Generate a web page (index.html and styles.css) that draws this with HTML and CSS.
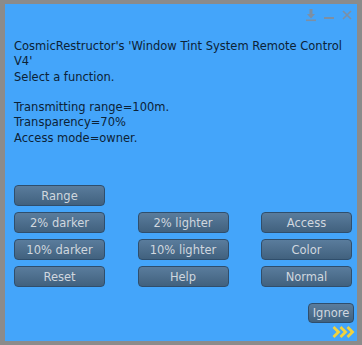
FILE: index.html
```html
<!DOCTYPE html>
<html>
<head>
<meta charset="utf-8">
<link rel="stylesheet" href="styles.css">
</head>
<body>
<div class="panel">
  <div class="titlebar">
    <svg class="ico" width="12" height="14" viewBox="0 0 12 14"><path d="M4.5 1h3v5h2.5L6 10.5 2 6h2.5z" fill="#7d8fa3"/><rect x="1" y="11.5" width="10" height="1.6" fill="#7d8fa3"/></svg>
    <svg class="ico" width="12" height="14" viewBox="0 0 12 14"><rect x="1" y="9" width="10" height="2" fill="#7d8fa3"/></svg>
    <svg class="ico" width="12" height="14" viewBox="0 0 12 14"><path d="M2 3l8 8M10 3l-8 8" stroke="#7d8fa3" stroke-width="1.6"/></svg>
  </div>
  <div class="message">
    <p>CosmicRestructor's 'Window Tint System Remote Control V4'</p>
    <p>Select a function.</p>
    <p class="blank">&nbsp;</p>
    <p>Transmitting range=100m.</p>
    <p>Transparency=70%</p>
    <p>Access mode=owner.</p>
  </div>
  <div class="buttons">
    <button class="btn">Range</button><span></span><span></span>
    <button class="btn">2% darker</button><button class="btn">2% lighter</button><button class="btn">Access</button>
    <button class="btn">10% darker</button><button class="btn">10% lighter</button><button class="btn">Color</button>
    <button class="btn">Reset</button><button class="btn">Help</button><button class="btn">Normal</button>
  </div>
  <div class="footer">
    <button class="btn ignore">Ignore</button>
  </div>
  <div class="grip">
    <svg width="24" height="14" viewBox="0 0 24 14"><path d="M1.5 2l5 5-5 5M8.5 2l5 5-5 5M15.5 2l5 5-5 5" fill="none" stroke="#f2d23c" stroke-width="2.8"/></svg>
  </div>
</div>
</body>
</html>
```

FILE: styles.css
```css
html, body {
  margin: 0;
  padding: 0;
}
body {
  width: 362px;
  height: 345px;
  background: #8b8b8b;
  overflow: hidden;
  font-family: "DejaVu Sans", sans-serif;
}
.panel {
  position: relative;
  margin: 4px 0 0 5px;
  width: 352px;
  height: 337px;
  background: #44a5fa;
  box-sizing: border-box;
  display: flex;
  flex-direction: column;
}
.titlebar {
  height: 24px;
  display: flex;
  justify-content: flex-end;
  align-items: flex-start;
  gap: 6px;
  padding: 4px 4px 0 0;
  box-sizing: border-box;
}
.ico { display: block; }
.message {
  margin: 11px 0 0 9px;
  width: 340px;
  font-size: 11.5px;
  line-height: 15.3px;
  color: #0c2236;
}
.message p { margin: 0; }
.buttons {
  margin: 39px 0 0 9px;
  width: 338px;
  display: grid;
  grid-template-columns: 91px 91px 91px;
  justify-content: space-between;
  grid-auto-rows: 21px;
  row-gap: 6px;
}
.btn {
  font-family: "DejaVu Sans", sans-serif;
  font-size: 11.5px;
  color: #d0d7df;
  background: linear-gradient(#5a7c9c, #41617e);
  border: 1px solid #2f4e6c;
  border-radius: 4px;
  padding: 0;
  margin: 0;
  height: 21px;
}
.footer {
  display: flex;
  justify-content: flex-end;
  margin-top: 16px;
  padding-right: 3px;
}
.ignore {
  width: 46px;
  height: 20px;
}
.grip {
  position: absolute;
  right: 1px;
  bottom: 2px;
  line-height: 0;
}
```
